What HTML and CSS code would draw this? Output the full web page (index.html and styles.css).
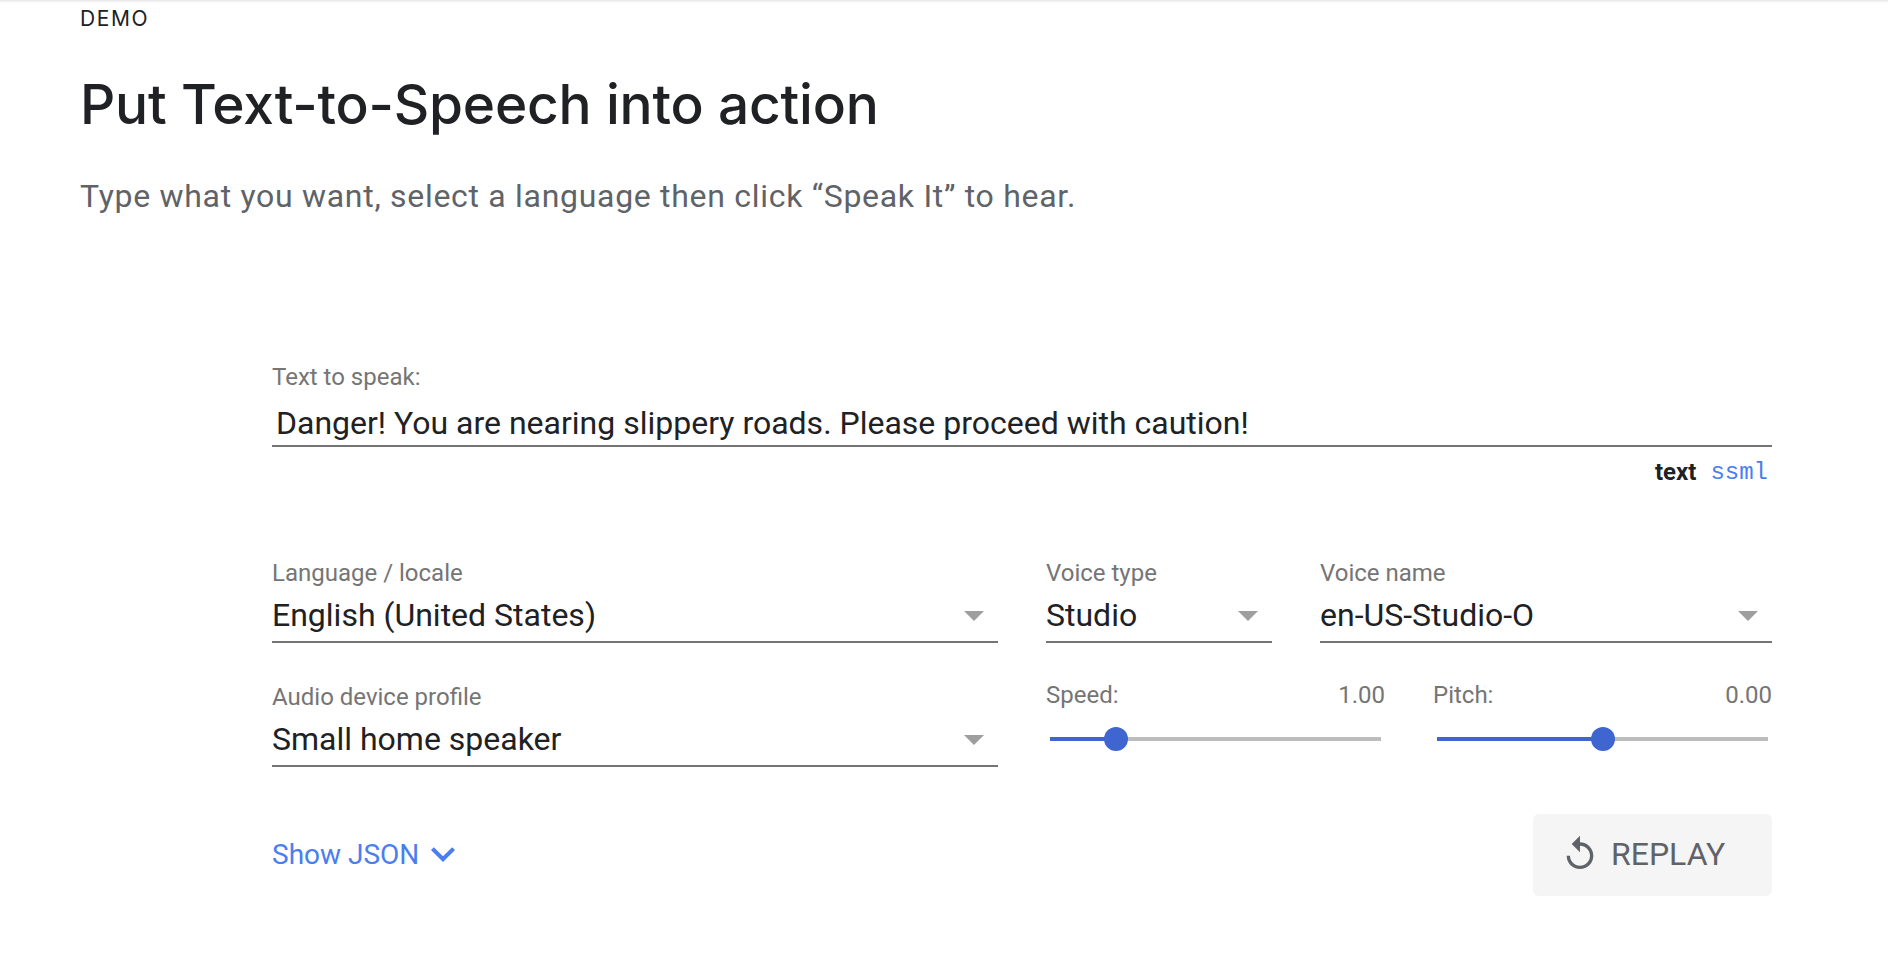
FILE: index.html
```html
<!DOCTYPE html>
<html lang="en">
<head>
  <meta charset="UTF-8" />
  <meta name="viewport" content="width=device-width, initial-scale=1.0"/>
  <title>Text-to-Speech demo</title>
  <link rel="stylesheet" href="styles.css">
</head>
<body>
  <section class="demo">
    <div class="eyebrow">DEMO</div>
    <h1>Put Text-to-Speech into action</h1>
    <p class="lead">Type what you want, select a language then click “Speak It” to hear.</p>

    <div class="panel">
      <div class="field-label">Text to speak:</div>
      <div class="text-input">Danger! You are nearing slippery roads. Please proceed with caution!</div>
      <div class="mode">
        <span class="mode-text">text</span>
        <span class="mode-ssml">ssml</span>
      </div>

      <div class="columns row-first">
        <div class="select-box">
          <div class="field-label">Language / locale</div>
          <div class="select"><span>English (United States)</span><i class="caret"></i></div>
        </div>
        <div class="voice">
          <div class="select-box">
            <div class="field-label">Voice type</div>
            <div class="select"><span>Studio</span><i class="caret"></i></div>
          </div>
          <div class="select-box">
            <div class="field-label">Voice name</div>
            <div class="select"><span>en-US-Studio-O</span><i class="caret"></i></div>
          </div>
        </div>
      </div>

      <div class="columns row-second">
        <div class="select-box">
          <div class="field-label">Audio device profile</div>
          <div class="select"><span>Small home speaker</span><i class="caret"></i></div>
        </div>
        <div class="sliders">
          <div class="slider-box">
            <div class="slider-head"><span>Speed:</span><span>1.00</span></div>
            <div class="slider">
              <div class="slider-fill" style="width: 20%"></div>
              <div class="slider-thumb"></div>
              <div class="slider-rest"></div>
            </div>
          </div>
          <div class="slider-box">
            <div class="slider-head"><span>Pitch:</span><span>0.00</span></div>
            <div class="slider">
              <div class="slider-fill" style="width: 50%"></div>
              <div class="slider-thumb"></div>
              <div class="slider-rest"></div>
            </div>
          </div>
        </div>
      </div>

      <div class="actions">
        <a class="show-json" href="#">Show JSON
          <svg viewBox="0 0 24 24" width="48" height="48"><path d="M16.59 8.59L12 13.17 7.41 8.59 6 10l6 6 6-6z"/></svg>
        </a>
        <button class="replay">
          <svg viewBox="0 0 24 24" width="40" height="40"><path d="M12 5V1L7 6l5 5V7c3.31 0 6 2.69 6 6s-2.69 6-6 6-6-2.69-6-6H4c0 4.42 3.58 8 8 8s8-3.58 8-8-3.58-8-8-8z"/></svg>
          REPLAY
        </button>
      </div>
    </div>
  </section>
</body>
</html>
```

FILE: styles.css
```css
body {
  margin: 0;
  height: 960px;
  overflow: hidden;
  background: #fff;
  color: #202124;
  font-family: Roboto, sans-serif;
  box-shadow: inset 0 3px 3px -2px rgba(0,0,0,0.12);
}
.demo {
  padding: 6px 0 0 80px;
}
.eyebrow {
  font-family: Inter, sans-serif;
  font-size: 21px;
  font-weight: 400;
  line-height: 26px;
  letter-spacing: 1.6px;
}
h1 {
  margin: 37px 0 0;
  font-family: Inter, sans-serif;
  font-size: 55px;
  font-weight: 500;
  line-height: 70px;
  letter-spacing: -0.2px;
}
.lead {
  margin: 34px 0 0;
  font-size: 32px;
  line-height: 46px;
  letter-spacing: 0.7px;
  color: #5f6368;
}
.panel {
  width: 1500px;
  margin: 143px 0 0 192px;
}
.field-label {
  font-size: 24px;
  line-height: 30px;
  color: #757575;
}
.text-input {
  padding: 8px 0 0 4px;
  height: 45px;
  line-height: 46px;
  font-size: 32px;
  border-bottom: 2px solid #757575;
}
.mode {
  display: flex;
  justify-content: flex-end;
  align-items: center;
  gap: 14px;
  padding: 7px 4px 0 0;
  height: 36px;
}
.mode-text {
  font-size: 24px;
  font-weight: 700;
}
.mode-ssml {
  font-family: "Liberation Mono", monospace;
  font-size: 24px;
  color: #4a7ef0;
}
.columns {
  display: grid;
  grid-template-columns: 1fr 1fr;
  gap: 48px;
}
.row-first {
  margin-top: 68px;
}
.row-second {
  margin-top: 39px;
}
.voice, .sliders {
  display: grid;
  gap: 48px;
}
.voice {
  grid-template-columns: 1fr 2fr;
}
.sliders {
  grid-template-columns: 1fr 1fr;
}
.select {
  display: flex;
  justify-content: space-between;
  align-items: center;
  height: 52px;
  padding: 1px 14px 0 0;
  font-size: 32px;
  border-bottom: 2px solid #757575;
}
.caret {
  width: 0;
  height: 0;
  margin-top: 2px;
  border-left: 10px solid transparent;
  border-right: 10px solid transparent;
  border-top: 10px solid #9e9e9e;
}
.slider-head {
  display: flex;
  justify-content: space-between;
  font-size: 24px;
  line-height: 26px;
  color: #757575;
}
.slider {
  display: flex;
  align-items: center;
  height: 24px;
  margin: 19px 4px 0;
}
.slider-fill {
  height: 4px;
  background: #3f65d0;
}
.slider-rest {
  flex: 1;
  height: 4px;
  background: #bdbdbd;
}
.slider-thumb {
  flex: none;
  width: 24px;
  height: 24px;
  margin-left: -12px;
  margin-right: -12px;
  border-radius: 50%;
  background: #3f65d0;
  position: relative;
}
.actions {
  display: flex;
  justify-content: space-between;
  align-items: center;
  margin-top: 47px;
}
.show-json {
  display: flex;
  align-items: center;
  gap: 0;
  padding-bottom: 2px;
  font-size: 28px;
  color: #4a7ef0;
  text-decoration: none;
}
.show-json svg {
  fill: #4a7ef0;
}
.replay {
  display: flex;
  align-items: center;
  gap: 11px;
  width: 239px;
  height: 82px;
  padding: 0 0 2px 27px;
  border: none;
  border-radius: 6px;
  background: #f5f5f5;
  color: #5f6368;
  font-family: Roboto, sans-serif;
  font-size: 32px;
}
.replay svg {
  fill: #5f6368;
}
```
